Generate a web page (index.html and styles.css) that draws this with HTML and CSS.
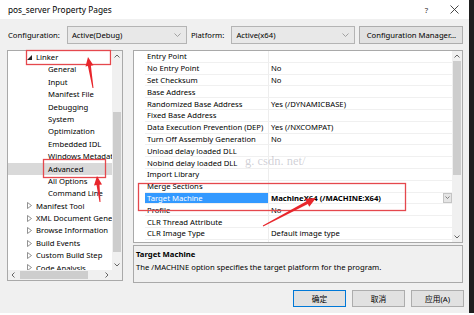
FILE: index.html
```html
<!DOCTYPE html>
<html lang="en">
<head>
  <meta charset="UTF-8">
  <title>pos_server Property Pages</title>
  <link rel="stylesheet" href="styles.css">
</head>
<body>
  <div class="screen">
    <div class="dialog">
      <div class="titlebar">
        <span class="title">pos_server Property Pages</span>
        <span class="help">?</span>
        <svg class="close" width="9" height="9" viewBox="0 0 9 9"><path d="M0.5 0.5L8.5 8.5M8.5 0.5L0.5 8.5" stroke="#333" stroke-width="0.9"/></svg>
      </div>

      <div class="configbar">
        <span class="label">Configuration:</span>
        <div class="combo combo-config">
          <span>Active(Debug)</span>
          <svg width="7" height="4" viewBox="0 0 7 4"><polyline points="0.5,0.5 3.5,3.5 6.5,0.5" fill="none" stroke="#999" stroke-width="0.9"/></svg>
        </div>
        <span class="label label-platform">Platform:</span>
        <div class="combo combo-platform">
          <span>Active(x64)</span>
          <svg width="7" height="4" viewBox="0 0 7 4"><polyline points="0.5,0.5 3.5,3.5 6.5,0.5" fill="none" stroke="#999" stroke-width="0.9"/></svg>
        </div>
        <button class="btn btn-manager">Configuration Manager...</button>
      </div>

      <div class="main">
        <div class="tree">
          <ul class="tree-items">
            <li class="node"><svg class="twisty" width="5" height="5" viewBox="0 0 5 5"><polygon points="5,0 5,5 0,5" fill="#222"/></svg><span>Linker</span></li>
            <li class="leaf">General</li>
            <li class="leaf">Input</li>
            <li class="leaf">Manifest File</li>
            <li class="leaf">Debugging</li>
            <li class="leaf">System</li>
            <li class="leaf">Optimization</li>
            <li class="leaf">Embedded IDL</li>
            <li class="leaf">Windows Metadata</li>
            <li class="leaf selected">Advanced</li>
            <li class="leaf">All Options</li>
            <li class="leaf">Command Line</li>
            <li class="node"><svg class="twisty" width="5" height="7" viewBox="0 0 5 7"><polygon points="0.5,0.5 4.5,3.5 0.5,6.5" fill="none" stroke="#777" stroke-width="0.8"/></svg><span>Manifest Tool</span></li>
            <li class="node"><svg class="twisty" width="5" height="7" viewBox="0 0 5 7"><polygon points="0.5,0.5 4.5,3.5 0.5,6.5" fill="none" stroke="#777" stroke-width="0.8"/></svg><span>XML Document Generator</span></li>
            <li class="node"><svg class="twisty" width="5" height="7" viewBox="0 0 5 7"><polygon points="0.5,0.5 4.5,3.5 0.5,6.5" fill="none" stroke="#777" stroke-width="0.8"/></svg><span>Browse Information</span></li>
            <li class="node"><svg class="twisty" width="5" height="7" viewBox="0 0 5 7"><polygon points="0.5,0.5 4.5,3.5 0.5,6.5" fill="none" stroke="#777" stroke-width="0.8"/></svg><span>Build Events</span></li>
            <li class="node"><svg class="twisty" width="5" height="7" viewBox="0 0 5 7"><polygon points="0.5,0.5 4.5,3.5 0.5,6.5" fill="none" stroke="#777" stroke-width="0.8"/></svg><span>Custom Build Step</span></li>
            <li class="node"><svg class="twisty" width="5" height="7" viewBox="0 0 5 7"><polygon points="0.5,0.5 4.5,3.5 0.5,6.5" fill="none" stroke="#777" stroke-width="0.8"/></svg><span>Code Analysis</span></li>
          </ul>
          <div class="vscroll tree-vscroll">
            <div class="arrow"><svg width="6" height="4" viewBox="0 0 6 4"><polyline points="0.5,3.5 3,1 5.5,3.5" fill="none" stroke="#555" stroke-width="0.9"/></svg></div>
            <div class="track"><div class="thumb"></div></div>
            <div class="arrow"><svg width="6" height="4" viewBox="0 0 6 4"><polyline points="0.5,0.5 3,3 5.5,0.5" fill="none" stroke="#555" stroke-width="0.9"/></svg></div>
          </div>
          <div class="hscroll">
            <div class="arrow"><svg width="4" height="6" viewBox="0 0 4 6"><polyline points="3.5,0.5 1,3 3.5,5.5" fill="none" stroke="#555" stroke-width="0.9"/></svg></div>
            <div class="track"><div class="thumb"></div></div>
            <div class="arrow"><svg width="4" height="6" viewBox="0 0 4 6"><polyline points="0.5,0.5 3,3 0.5,5.5" fill="none" stroke="#555" stroke-width="0.9"/></svg></div>
          </div>
          <div class="corner"></div>
        </div>

        <div class="right">
          <div class="grid">
            <div class="rows">
              <div class="row"><span></span><span class="name">Entry Point</span><span class="value"></span></div>
              <div class="row"><span></span><span class="name">No Entry Point</span><span class="value">No</span></div>
              <div class="row"><span></span><span class="name">Set Checksum</span><span class="value">No</span></div>
              <div class="row"><span></span><span class="name">Base Address</span><span class="value"></span></div>
              <div class="row"><span></span><span class="name">Randomized Base Address</span><span class="value">Yes (/DYNAMICBASE)</span></div>
              <div class="row"><span></span><span class="name">Fixed Base Address</span><span class="value"></span></div>
              <div class="row"><span></span><span class="name">Data Execution Prevention (DEP)</span><span class="value">Yes (/NXCOMPAT)</span></div>
              <div class="row"><span></span><span class="name">Turn Off Assembly Generation</span><span class="value">No</span></div>
              <div class="row"><span></span><span class="name">Unload delay loaded DLL</span><span class="value"></span></div>
              <div class="row"><span></span><span class="name">Nobind delay loaded DLL</span><span class="value"></span></div>
              <div class="row"><span></span><span class="name">Import Library</span><span class="value"></span></div>
              <div class="row"><span></span><span class="name">Merge Sections</span><span class="value"></span></div>
              <div class="row row-selected"><span></span><span class="name">Target Machine</span><span class="value"><b>MachineX64 (/MACHINE:X64)</b><span class="dropbtn"><svg width="5" height="3" viewBox="0 0 5 3"><polyline points="0.5,0.5 2.5,2.5 4.5,0.5" fill="none" stroke="#666" stroke-width="0.8"/></svg></span></span></div>
              <div class="row"><span></span><span class="name">Profile</span><span class="value">No</span></div>
              <div class="row"><span></span><span class="name">CLR Thread Attribute</span><span class="value"></span></div>
              <div class="row"><span></span><span class="name">CLR Image Type</span><span class="value">Default image type</span></div>
              <div class="row"><span></span><span class="name">Key File</span><span class="value"></span></div>
            </div>
            <div class="vscroll grid-vscroll">
              <div class="arrow"><svg width="6" height="4" viewBox="0 0 6 4"><polyline points="0.5,3.5 3,1 5.5,3.5" fill="none" stroke="#555" stroke-width="0.9"/></svg></div>
              <div class="track"><div class="thumb"></div></div>
              <div class="arrow"><svg width="6" height="4" viewBox="0 0 6 4"><polyline points="0.5,0.5 3,3 5.5,0.5" fill="none" stroke="#555" stroke-width="0.9"/></svg></div>
            </div>
          </div>
          <div class="desc">
            <div class="desc-title">Target Machine</div>
            <div class="desc-text">The /MACHINE option specifies the target platform for the program.</div>
          </div>
        </div>
      </div>

      <div class="footer">
        <button class="btn btn-ok">确定</button>
        <button class="btn">取消</button>
        <button class="btn">应用(A)</button>
      </div>

      <span class="watermark">g. csdn. net/</span>

      <!-- red annotations drawn over the dialog -->
      <svg class="marks" width="469" height="313" viewBox="0 0 469 313">
        <g fill="none" stroke="#e5484d" stroke-width="1.3">
          <rect x="26.5" y="50.5" width="84" height="14"/>
          <rect x="43.5" y="159.5" width="62" height="18"/>
          <rect x="138.5" y="183.5" width="267" height="27"/>
        </g>
        <g fill="#e8262c">
          <polygon points="88,57 93.4,65.3 90.9,65.7 93.5,87.9 92.5,88.1 87.9,66.1 85.5,66.5"/>
          <polygon points="97,176 102,184.4 99.5,184.7 100.5,201.9 99.5,202.1 96.5,185.1 94,185.4"/>
          <polygon points="316,198 309.25,206.65 307.9,204.1 263.2,226.4 262.8,225.6 306.4,201.3 305.05,198.69"/>
        </g>
      </svg>
    </div>
    <div class="edge"></div>
  </div>
</body>
</html>
```

FILE: styles.css
```css
* {
  margin: 0;
  padding: 0;
  box-sizing: border-box;
}
body {
  background: #fff;
  font-family: "Noto Sans", "Noto Sans CJK SC", sans-serif;
  font-size: 7.7px;
  color: #000;
}
.screen {
  display: flex;
  height: 313px;
}
.dialog {
  position: relative;
  width: 469px;
  height: 313px;
  background: #f0f0f0;
  display: flex;
  flex-direction: column;
}
.edge {
  width: 5px;
  background: #1f1f1f;
}

/* title bar */
.titlebar {
  height: 19px;
  background: #fff;
  display: flex;
  align-items: center;
  padding-left: 8px;
}
.title {
  font-size: 8.3px;
}
.help {
  margin-left: auto;
  margin-right: 22px;
  color: #333;
}
.close {
  margin-right: 10px;
}

/* configuration row */
.configbar {
  height: 31px;
  display: flex;
  align-items: center;
  padding-left: 8px;
}
.label {
  margin-right: 7px;
}
.label-platform {
  margin-left: 4px;
}
.combo {
  height: 18px;
  background: #e8e8e8;
  border: 1px solid #b4b4b4;
  display: flex;
  align-items: center;
  justify-content: space-between;
  padding: 0 5px 0 4px;
}
.combo-config {
  width: 120px;
}
.combo-platform {
  width: 124px;
}
.btn {
  font-family: "Noto Sans", "Noto Sans CJK SC", sans-serif;
  font-size: 7.7px;
  background: #e1e1e1;
  border: 1px solid #adadad;
  color: #000;
}
.btn-manager {
  width: 104px;
  height: 18px;
  margin-left: 4px;
}

/* main area */
.main {
  height: 233px;
  display: flex;
  gap: 10px;
  padding-left: 7px;
}
.tree {
  width: 116px;
  height: 231px;
  background: #fff;
  border: 1px solid #a9a9a9;
  display: grid;
  grid-template-columns: 104px 10px;
  grid-template-rows: 219px 10px;
}
.tree-items {
  list-style: none;
  overflow: hidden;
}
.tree-items li {
  height: 12.4px;
  line-height: 12.4px;
  white-space: nowrap;
  display: flex;
  align-items: center;
}
.node {
  padding-left: 19px;
}
.twisty {
  flex-shrink: 0;
  margin-right: 4px;
}
.leaf {
  padding-left: 40px;
}
.tree-items .selected {
  background: #d9d9d9;
}

/* scrollbars */
.vscroll {
  display: flex;
  flex-direction: column;
  background: #f0f0f0;
}
.hscroll {
  display: flex;
  background: #f0f0f0;
}
.arrow {
  width: 10px;
  height: 10px;
  display: flex;
  align-items: center;
  justify-content: center;
}
.track {
  flex: 1;
  display: flex;
}
.vscroll .track {
  flex-direction: column;
}
.thumb {
  background: #cdcdcd;
}
.tree-vscroll .thumb {
  margin: 51px 1px 0;
  height: 140px;
}
.hscroll .thumb {
  margin: 1px 0 1px 2px;
  width: 68px;
}
.corner {
  background: #f0f0f0;
}

/* property grid */
.right {
  width: 330px;
  display: flex;
  flex-direction: column;
}
.grid {
  height: 193px;
  background: #fff;
  border: 1px solid #a9a9a9;
  display: grid;
  grid-template-columns: 318px 10px;
  grid-template-rows: 191px;
}
.rows {
  overflow: hidden;
}
.row {
  height: 11.8px;
  display: grid;
  grid-template-columns: 11px 124px 1fr;
  white-space: nowrap;
}
.row .name,
.row .value {
  border-bottom: 1px solid #f0f0f0;
  display: flex;
  align-items: center;
  padding-left: 2px;
  overflow: hidden;
}
.row .name {
  border-right: 1px solid #ededed;
}
.row-selected .name {
  background: #3399ff;
  color: #fff;
}
.row-selected .value {
  justify-content: space-between;
}
.dropbtn {
  flex-shrink: 0;
  width: 9px;
  height: 10px;
  background: #e5e5e5;
  border: 1px solid #c4c4c4;
  display: flex;
  align-items: center;
  justify-content: center;
}
.grid-vscroll .thumb {
  margin: 0 1px;
  height: 114px;
}

/* description */
.desc {
  margin-top: 2px;
  height: 38px;
  border: 1px solid #a9a9a9;
  padding: 2px 2px;
  line-height: 12.5px;
}
.desc-title {
  font-weight: bold;
}

/* dialog buttons */
.footer {
  height: 30px;
  display: flex;
  justify-content: flex-end;
  align-items: center;
  gap: 6px;
  padding-right: 5px;
}
.footer .btn {
  width: 53px;
  height: 17px;
}
.btn-ok {
  border-color: #0078d7;
}

.watermark {
  position: absolute;
  left: 245px;
  top: 154px;
  font-family: "Liberation Serif", serif;
  font-size: 12.5px;
  color: rgba(150, 150, 165, 0.45);
}
.marks {
  position: absolute;
  left: 0;
  top: 0;
  pointer-events: none;
}
```
